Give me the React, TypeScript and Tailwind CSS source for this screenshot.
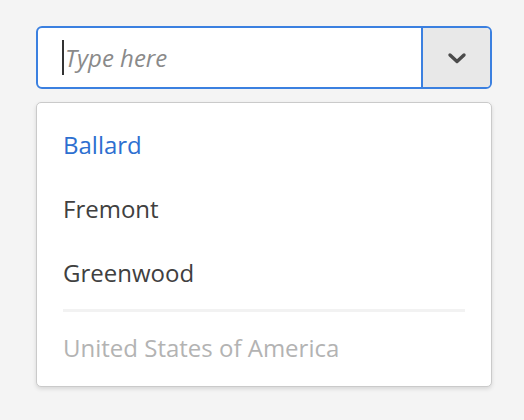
import React from "react";

const items = ["Ballard", "Fremont", "Greenwood"];

export default function App() {
  return (
    <div className="min-h-[420px] w-full bg-[#f4f4f4] pt-[26px] pl-[36px]" style={{ fontFamily: '"Open Sans", sans-serif' }}>
      <div className="w-[456px]">
        <div className="flex h-[63px] rounded-[6px] border-2 border-[#3b80e0] bg-white overflow-hidden">
          <div className="flex flex-1 items-center pl-[24px]">
            <span className="h-[35px] w-[2px] bg-[#333]" />
            <span className="italic text-[24px] text-[#8a8a8a] pl-[1px]">Type here</span>
          </div>
          <div className="flex w-[69px] items-center justify-center border-l-2 border-[#3b80e0] bg-[#e8e8e8]">
            <svg width="20" height="14" viewBox="0 0 20 14">
              <path d="M3 4 L10 10.5 L17 4" fill="none" stroke="#4b4b4b" strokeWidth="3.4" strokeLinecap="round" strokeLinejoin="round" />
            </svg>
          </div>
        </div>
        <div className="mt-[13px] rounded-[5px] border border-[#cacaca] bg-white pt-[10px] pb-[6px] shadow-[0_2px_4px_rgba(0,0,0,0.12)]">
          {items.map((it, i) => (
            <div key={it} className={`flex h-[64px] items-center pl-[26px] text-[24px] ${i === 0 ? "text-[#2d6fd0]" : "text-[#404040]"}`}>
              {it}
            </div>
          ))}
          <div className="mx-[26px] my-[4px] h-[3px] bg-[#f2f2f2]" />
          <div className="flex h-[64px] items-center pl-[26px] text-[24px] text-[#b3b3b3]">United States of America</div>
        </div>
      </div>
    </div>
  );
}
